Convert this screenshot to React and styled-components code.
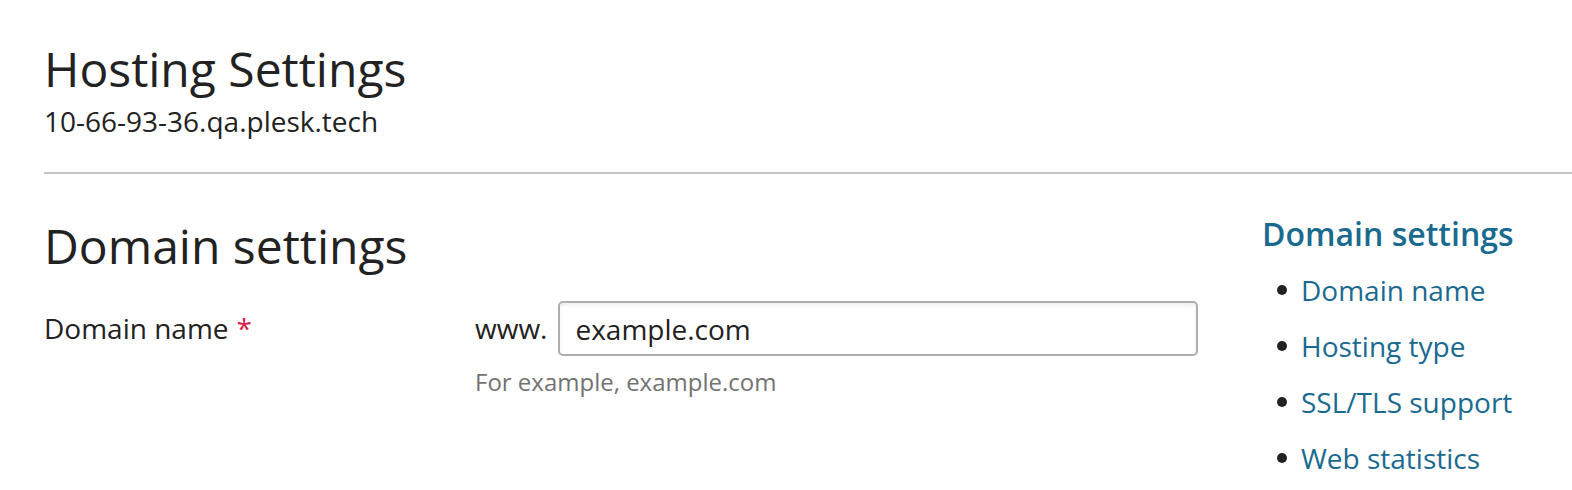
import React from "react";
import styled, { createGlobalStyle } from "styled-components";

const GlobalStyle = createGlobalStyle`
  html, body {
    margin: 0;
    padding: 0;
    background: #fff;
  }
  body {
    font-family: "Open Sans", "DejaVu Sans", sans-serif;
    color: #222;
    -webkit-font-smoothing: antialiased;
  }
`;

const Page = styled.div`
  padding: 40px 0 0 44px;
  overflow: hidden;
`;

const Header = styled.header`
  padding-bottom: 31px;
  border-bottom: 2px solid #c4c4c4;
`;

const Title = styled.h1`
  margin: 0;
  font-size: 48px;
  line-height: 57.6px;
  font-weight: 400;
`;

const Subtitle = styled.div`
  margin-top: 3px;
  font-size: 28px;
  line-height: 40px;
`;

const Body = styled.div`
  display: flex;
  align-items: flex-start;
  padding-top: 43px;
`;

const Main = styled.main`
  width: 1153px;
  flex: none;
`;

const SectionTitle = styled.h2`
  margin: 0 0 27px;
  font-size: 48px;
  line-height: 57.6px;
  font-weight: 400;
`;

const FormRow = styled.div`
  display: flex;
  align-items: flex-start;
`;

const Label = styled.label`
  width: 431px;
  flex: none;
  font-size: 28px;
  line-height: 55px;
`;

const Required = styled.span`
  margin-left: 8px;
  color: #d3234a;
`;

const Field = styled.div`
  flex: 1;
`;

const InputLine = styled.div`
  display: flex;
  align-items: center;
`;

const Prefix = styled.span`
  font-size: 28px;
  line-height: 55px;
  margin-right: 11px;
`;

const Input = styled.input`
  box-sizing: border-box;
  width: 640px;
  height: 55px;
  padding: 0 15px;
  border: 2px solid #adadad;
  border-radius: 5px;
  box-shadow: inset 0 3px 3px rgba(0, 0, 0, 0.06);
  font-family: inherit;
  font-size: 28px;
  color: #222;
  outline: none;
`;

const Hint = styled.div`
  margin-top: 10px;
  font-size: 24px;
  line-height: 32px;
  color: #737373;
`;

const Sidebar = styled.aside`
  margin-left: 65px;
  margin-top: -2px;
  flex: none;
`;

const SidebarTitle = styled.div`
  font-size: 32px;
  line-height: 38px;
  font-weight: 600;
  color: #1a6a90;
`;

const NavList = styled.ul`
  list-style: none;
  margin: 17px 0 0;
  padding: 0;
`;

const NavItem = styled.li`
  position: relative;
  padding-left: 39px;
  font-size: 28px;
  line-height: 40px;
  & + & {
    margin-top: 16px;
  }
  &::before {
    content: "";
    position: absolute;
    left: 15px;
    top: 15px;
    width: 10px;
    height: 10px;
    border-radius: 50%;
    background: #222;
  }
`;

const NavLink = styled.a`
  color: #1a6a90;
  text-decoration: none;
`;

const navItems = ["Domain name", "Hosting type", "SSL/TLS support", "Web statistics"];

export default function App() {
  return (
    <>
      <GlobalStyle />
      <Page>
        <Header>
          <Title>Hosting Settings</Title>
          <Subtitle>10-66-93-36.qa.plesk.tech</Subtitle>
        </Header>
        <Body>
          <Main>
            <SectionTitle>Domain settings</SectionTitle>
            <FormRow>
              <Label htmlFor="domainName">
                Domain name<Required>*</Required>
              </Label>
              <Field>
                <InputLine>
                  <Prefix>www.</Prefix>
                  <Input id="domainName" defaultValue="example.com" />
                </InputLine>
                <Hint>For example, example.com</Hint>
              </Field>
            </FormRow>
          </Main>
          <Sidebar>
            <SidebarTitle>Domain settings</SidebarTitle>
            <NavList>
              {navItems.map((item) => (
                <NavItem key={item}>
                  <NavLink href="#">{item}</NavLink>
                </NavItem>
              ))}
            </NavList>
          </Sidebar>
        </Body>
      </Page>
    </>
  );
}
